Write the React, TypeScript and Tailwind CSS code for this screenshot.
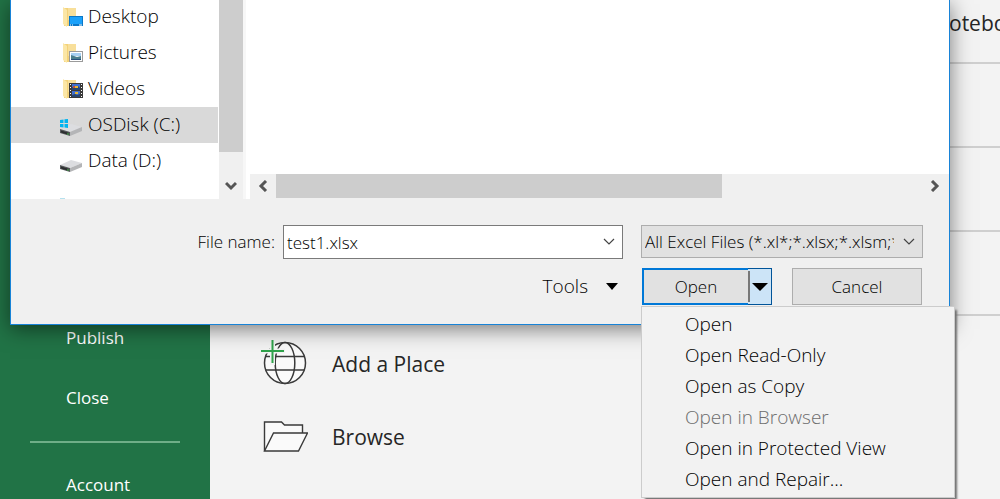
import type { ReactNode } from 'react'

const menuItems = [
  { label: 'Open' },
  { label: 'Open Read-Only' },
  { label: 'Open as Copy' },
  { label: 'Open in Browser', disabled: true },
  { label: 'Open in Protected View' },
  { label: 'Open and Repair...' },
]

function FolderIcon({ children }: { children?: ReactNode }) {
  return (
    <svg width="24" height="22" viewBox="0 0 24 22" aria-hidden="true">
      <path d="M4 2h12v18H4z" fill="#f3d27a" />
      <path d="M8 2h8v12H8z" fill="#f8df9a" />
      <path d="M3 1l4 3v17l-4-3z" fill="#fbe6a6" />
      {children}
    </svg>
  )
}

function DesktopIcon() {
  return (
    <FolderIcon>
      <path d="M9 10h14v10H9z" fill="#0b78c8" />
      <path d="M10 11h12v7H10z" fill="#1ba1fa" />
      <path d="M10 19h1M12 19h1M19 19h3" stroke="#fff" />
    </FolderIcon>
  )
}

function PicturesIcon() {
  return (
    <FolderIcon>
      <path d="M9 9h14v11H9z" fill="#9b9b9b" />
      <path d="M10 10h12v9H10z" fill="#fff" />
      <path d="M11 11h10v3H11z" fill="#a8d0f2" />
      <path d="M11 13l3 1 3 1 4-1v4H11z" fill="#4b7f8d" />
      <path d="M11 17h10v1H11z" fill="#284f7c" />
    </FolderIcon>
  )
}

function VideosIcon() {
  return (
    <FolderIcon>
      <path d="M9 5h14v15H9z" fill="#3a3a3a" />
      <path d="M12 6h8v6h-8zM12 13h8v6h-8z" fill="#3f6fd0" />
      <path d="M12 9l3 1 3-2 2 2v2h-8zM12 17l3-1 2 1 3-1v3h-8z" fill="#27456f" />
      <path d="M15 8h3v2h-3zM15 14h3v2h-3z" fill="#e6b52e" />
      <path d="M13 8h2v2h-2z" fill="#c14d3a" />
      <path d="M10.500 6v14M21.500 6v14" stroke="#fff" strokeDasharray="1 2" />
    </FolderIcon>
  )
}

function DiskIcon({ system }: { system?: boolean }) {
  return (
    <svg width="24" height="22" viewBox="0 0 24 22" aria-hidden="true">
      <path d="M0 15l11-5 11 3-12 5z" fill="#dcdde0" />
      <path d="M0 15l10 3v4L0 19z" fill="#55585a" />
      <path d="M10 18l12-5v4l-12 5z" fill="#b4b5b7" />
      <path d="M1 16.500l8 2.500v2l-8-2.500z" fill="#2c2e2f" />
      <path d="M7 20h2" stroke="#4fbf55" />
      {system && <path d="M0 6l3.500-.5V9H0zM4.500 5.300L8 5v4H4.500zM0 10h3.500v3.500L0 13zM4.500 10H8v4l-3.500-.4z" fill="#00b4f0" />}
    </svg>
  )
}

const folders = [
  { name: 'Desktop', icon: <DesktopIcon /> },
  { name: 'Pictures', icon: <PicturesIcon /> },
  { name: 'Videos', icon: <VideosIcon /> },
  { name: 'OSDisk (C:)', icon: <DiskIcon system />, selected: true },
  { name: 'Data (D:)', icon: <DiskIcon /> },
]

function ThinChevron() {
  return (
    <svg width="12" height="8" viewBox="0 0 12 8" fill="none" stroke="#444" strokeWidth="1.2" aria-hidden="true">
      <path d="M1 1l5 5 5-5" />
    </svg>
  )
}

function ScrollArrow({ d }: { d: string }) {
  return (
    <svg width="12" height="12" viewBox="0 0 12 12" fill="none" stroke="#555" strokeWidth="3" aria-hidden="true">
      <path d={d} />
    </svg>
  )
}

function GlobeIcon() {
  return (
    <svg width="48" height="48" viewBox="0 0 48 48" fill="none" aria-hidden="true">
      <circle cx="25" cy="23" r="20.500" fill="#fafafa" stroke="#3a3a3a" strokeWidth="1.5" />
      <ellipse cx="25" cy="23" rx="9.800" ry="20.500" stroke="#3a3a3a" strokeWidth="1.5" />
      <path d="M6 16.500h38M6 30h38" stroke="#3a3a3a" strokeWidth="1.5" />
      <path d="M12.500 0v25M0 11h25" stroke="#f3f3f3" strokeWidth="5" />
      <path d="M12.500 0v23M1 11h23" stroke="#2fa34b" strokeWidth="2" />
    </svg>
  )
}

function BrowseIcon() {
  return (
    <svg width="48" height="48" viewBox="0 0 48 48" fill="#fafafa" stroke="#3a3a3a" strokeWidth="1.4" aria-hidden="true">
      <path d="M4.500 38v-29h17l3 3h18v8" />
      <path d="M4.500 38l9-18h34l-9 18z" />
    </svg>
  )
}

function Sidebar() {
  return (
    <nav className="w-[210px] shrink-0 bg-[#217346] pt-[308px] text-[17px] text-white">
      <a href="#publish" className="flex h-[60px] items-center pl-[66px]">Publish</a>
      <a href="#close" className="flex h-[60px] items-center pl-[66px]">Close</a>
      <hr className="mx-[30px] mt-[13px] mb-3 border-t-2 border-[#6fae88]" />
      <a href="#account" className="flex h-[60px] items-center pl-[66px]">Account</a>
    </nav>
  )
}

function Places() {
  return (
    <div className="w-[432px] shrink-0 pt-[327px] text-[21px] text-[#262626]">
      <button className="flex h-[73px] w-full items-center gap-6 pl-[50px]">
        <GlobeIcon />
        <span className="pt-0.5">Add a Place</span>
      </button>
      <button className="flex h-[73px] w-full items-center gap-6 pl-[50px]">
        <BrowseIcon />
        <span className="pt-0.5">Browse</span>
      </button>
    </div>
  )
}

function RecentList() {
  return (
    <ul className="min-w-0 flex-1 overflow-hidden text-[21px] text-[#262626]">
      <li className="h-16 border-b-2 border-[#cfcfcf] pt-2 pl-[307px]">otebo</li>
      <li className="h-[84px] border-b-2 border-[#cfcfcf]" />
      <li className="h-[84px] border-b-2 border-[#cfcfcf]" />
      <li className="h-[84px] border-b-2 border-[#cfcfcf]" />
    </ul>
  )
}

function FolderTree() {
  return (
    <div className="flex w-[232px] shrink-0 overflow-hidden">
      <ul className="-mt-px w-[207px] text-[19px]">
        {folders.map((f) => (
          <li
            key={f.name}
            className={`flex h-9 items-center gap-1 pl-[49px] ${f.selected ? 'bg-[#d9d9d9]' : ''}`}
          >
            {f.icon}
            <span className="pb-0.5">{f.name}</span>
          </li>
        ))}
        <li className="flex h-9 items-center pl-[49px]">
          <svg width="24" height="2" viewBox="0 0 24 2" className="mt-1" aria-hidden="true">
            <path d="M0 1h5" stroke="#6cc3dc" />
          </svg>
        </li>
      </ul>
      <div className="ml-px flex w-6 flex-col bg-[#f0f0f0]">
        <div className="h-[152px] bg-[#cdcdcd]" />
        <button aria-label="Scroll down" className="flex flex-1 items-center justify-center pt-5">
          <ScrollArrow d="M1 3l5 5 5-5" />
        </button>
      </div>
    </div>
  )
}

function FileList() {
  return (
    <div className="flex flex-1 flex-col">
      <div className="flex-1 bg-white" />
      <div className="flex h-[25px] items-start bg-[#f0f0f0]">
        <button aria-label="Scroll left" className="flex h-6 w-[26px] items-center justify-center">
          <ScrollArrow d="M9 1L4 6l5 5" />
        </button>
        <div className="h-6 flex-1">
          <div className="h-6 w-[69%] bg-[#cdcdcd]" />
        </div>
        <button aria-label="Scroll right" className="flex h-6 w-[26px] items-center justify-center">
          <ScrollArrow d="M2 1l5 5-5 5" />
        </button>
      </div>
    </div>
  )
}

function OpenMenu() {
  return (
    <div
      role="menu"
      className="absolute top-full -left-px mt-px w-[314px] border border-[#cccccc] bg-[#f2f2f2] py-0.5 text-[19px] shadow-[3px_3px_2px_-1px_#707070]"
    >
      {menuItems.map((item) => (
        <button
          key={item.label}
          role="menuitem"
          disabled={item.disabled}
          className="flex h-[31px] w-full items-center pl-[43px] text-black disabled:text-[#6d6d6d]"
        >
          {item.label}
        </button>
      ))}
    </div>
  )
}

function OpenDialog() {
  return (
    <div
      role="dialog"
      aria-label="Open"
      className="absolute top-0 right-[50px] left-[10px] border border-t-0 border-[#1883d7] bg-[#f0f0f0] text-[17px] font-light text-black shadow-[0_4px_20px_rgba(0,0,0,0.5)]"
    >
      <div className="flex h-[199px] bg-white">
        <FolderTree />
        <div className="mr-1 w-[3px] bg-[#f7f7f7]" />
        <FileList />
      </div>

      <div className="flex items-start pt-[26px] pr-[26px]">
        <label htmlFor="file-name" className="flex h-[34px] w-[264px] items-center justify-end">File name:</label>
        <div className="ml-2 flex h-[34px] flex-1 items-center border border-[#7a7a7a] bg-white pr-[7px]">
          <input id="file-name" defaultValue="test1.xlsx" className="h-8 min-w-0 flex-1 pl-[3px] outline-none" />
          <button aria-label="Show recent file names">
            <ThinChevron />
          </button>
        </div>
        <div className="relative ml-[18px] w-[282px]">
          <select
            aria-label="File type"
            className="block h-[33px] w-full appearance-none overflow-hidden border border-[#adadad] bg-[#e1e1e1] pr-7 pl-[3px]"
          >
            <option>All Excel Files (*.xl*;*.xlsx;*.xlsm;*</option>
          </select>
          <span className="pointer-events-none absolute inset-y-0 right-2 flex items-center">
            <ThinChevron />
          </span>
        </div>
      </div>

      <div className="flex items-start justify-end pt-[9px] pr-[27px] pb-[19px]">
        <button className="mr-6 flex h-[37px] items-center gap-[18px] text-[19px]">
          Tools
          <svg width="12" height="7" viewBox="0 0 12 7" aria-hidden="true">
            <path d="M0 0h12L6 7z" />
          </svg>
        </button>
        <div className="relative mr-5 flex h-[37px] w-[130px]">
          <button className="flex-1 border-2 border-r-0 border-[#0078d7] bg-[#e1e1e1]">Open</button>
          <button
            aria-label="More open options"
            className="flex w-6 items-center border border-l-0 border-[#005499] bg-[#cce4f7]"
          >
            <span className="mr-0.5 h-[31px] w-0.5 bg-[#777]" />
            <svg width="16" height="8" viewBox="0 0 16 8" aria-hidden="true">
              <path d="M0 0h16L8 8z" />
            </svg>
          </button>
          <OpenMenu />
        </div>
        <button className="h-[37px] w-[130px] border border-[#adadad] bg-[#e1e1e1]">Cancel</button>
      </div>
    </div>
  )
}

export default function App() {
  return (
    <div className="relative flex h-screen overflow-hidden bg-[#f3f3f3] font-['Open_Sans','Noto_Sans',sans-serif]">
      <Sidebar />
      <Places />
      <RecentList />
      <OpenDialog />
    </div>
  )
}
